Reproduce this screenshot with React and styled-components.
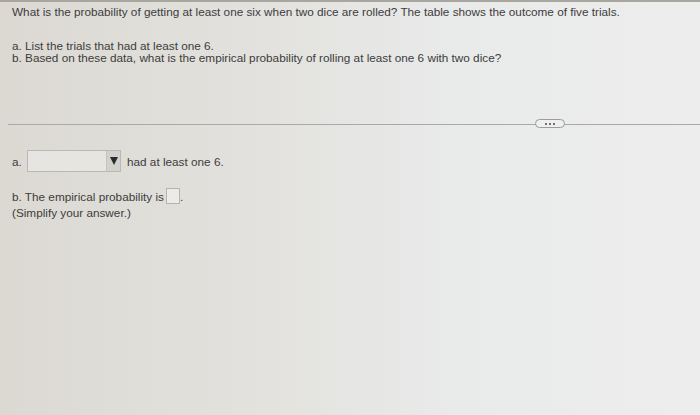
import React from "react";
import styled, { createGlobalStyle } from "styled-components";

const Global = createGlobalStyle`
  html, body { margin: 0; padding: 0; }
  body {
    width: 700px;
    height: 415px;
    overflow: hidden;
    font-family: "Liberation Sans", Arial, sans-serif;
  }
`;

const Page = styled.div`
  width: 700px;
  height: 415px;
  box-sizing: border-box;
  background: linear-gradient(90deg, #dcd9d3 0%, #e2e1dd 35%, #e9eaea 65%, #ecedec 100%);
  color: #3c3c3c;
  font-size: 11.75px;
  border-top: 2px solid #a9a6a0;
  display: flex;
  flex-direction: column;
`;

const Question = styled.div`
  padding: 4px 12px 0 12px;
  line-height: 12px;
`;

const Para = styled.p`
  margin: 0 0 ${(p) => p.$gap || 0}px 0;
  white-space: nowrap;
`;

const Divider = styled.div`
  margin: 60px 0 0 8px;
  height: 1px;
  background: #a9a9a7;
  position: relative;
`;

const Pill = styled.div`
  position: absolute;
  left: 527px;
  top: -5px;
  width: 30px;
  height: 9px;
  box-sizing: border-box;
  border: 1px solid #9b9b9b;
  border-radius: 5px;
  background: #efefef;
  display: flex;
  align-items: center;
  justify-content: center;
  gap: 2px;
`;

const Dot = styled.span`
  width: 2px;
  height: 2px;
  background: #707070;
`;

const Answers = styled.div`
  padding: 25px 12px 0 12px;
  display: flex;
  flex-direction: column;
`;

const Row = styled.div`
  display: flex;
  align-items: center;
  white-space: nowrap;
`;

const Label = styled.span`
  width: 15px;
`;

const Select = styled.div`
  width: 94px;
  height: 22px;
  box-sizing: border-box;
  border: 1px solid #b9b9b7;
  background: #e6e5e2;
  display: flex;
  justify-content: flex-end;
  margin-right: 6px;
`;

const Arrow = styled.div`
  width: 13px;
  height: 100%;
  background: #d2d1ce;
  border-left: 1px solid #c4c3c0;
  display: flex;
  align-items: center;
  justify-content: center;
`;

const Tri = styled.span`
  width: 0;
  height: 0;
  border-left: 4px solid transparent;
  border-right: 4px solid transparent;
  border-top: 8px solid #2b2b2b;
`;

const BRow = styled(Row)`
  margin-top: 16px;
`;

const Box = styled.span`
  display: inline-block;
  width: 14px;
  height: 16px;
  box-sizing: border-box;
  border: 1px solid #b4b4b2;
  background: #ecebe8;
  margin-left: 2px;
`;

const Note = styled.div`
  margin-top: 3px;
  line-height: 12px;
`;

export default function App() {
  return (
    <>
      <Global />
      <Page>
        <Question>
          <Para $gap={22}>
            What is the probability of getting at least one six when two dice are rolled? The table shows the outcome of five trials.
          </Para>
          <Para>a. List the trials that had at least one 6.</Para>
          <Para>b. Based on these data, what is the empirical probability of rolling at least one 6 with two dice?</Para>
        </Question>
        <Divider>
          <Pill>
            <Dot />
            <Dot />
            <Dot />
          </Pill>
        </Divider>
        <Answers>
          <Row>
            <Label>a.</Label>
            <Select>
              <Arrow>
                <Tri />
              </Arrow>
            </Select>
            <span>had at least one 6.</span>
          </Row>
          <BRow>
            <span>b. The empirical probability is</span>
            <Box />
            <span>.</span>
          </BRow>
          <Note>(Simplify your answer.)</Note>
        </Answers>
      </Page>
    </>
  );
}
